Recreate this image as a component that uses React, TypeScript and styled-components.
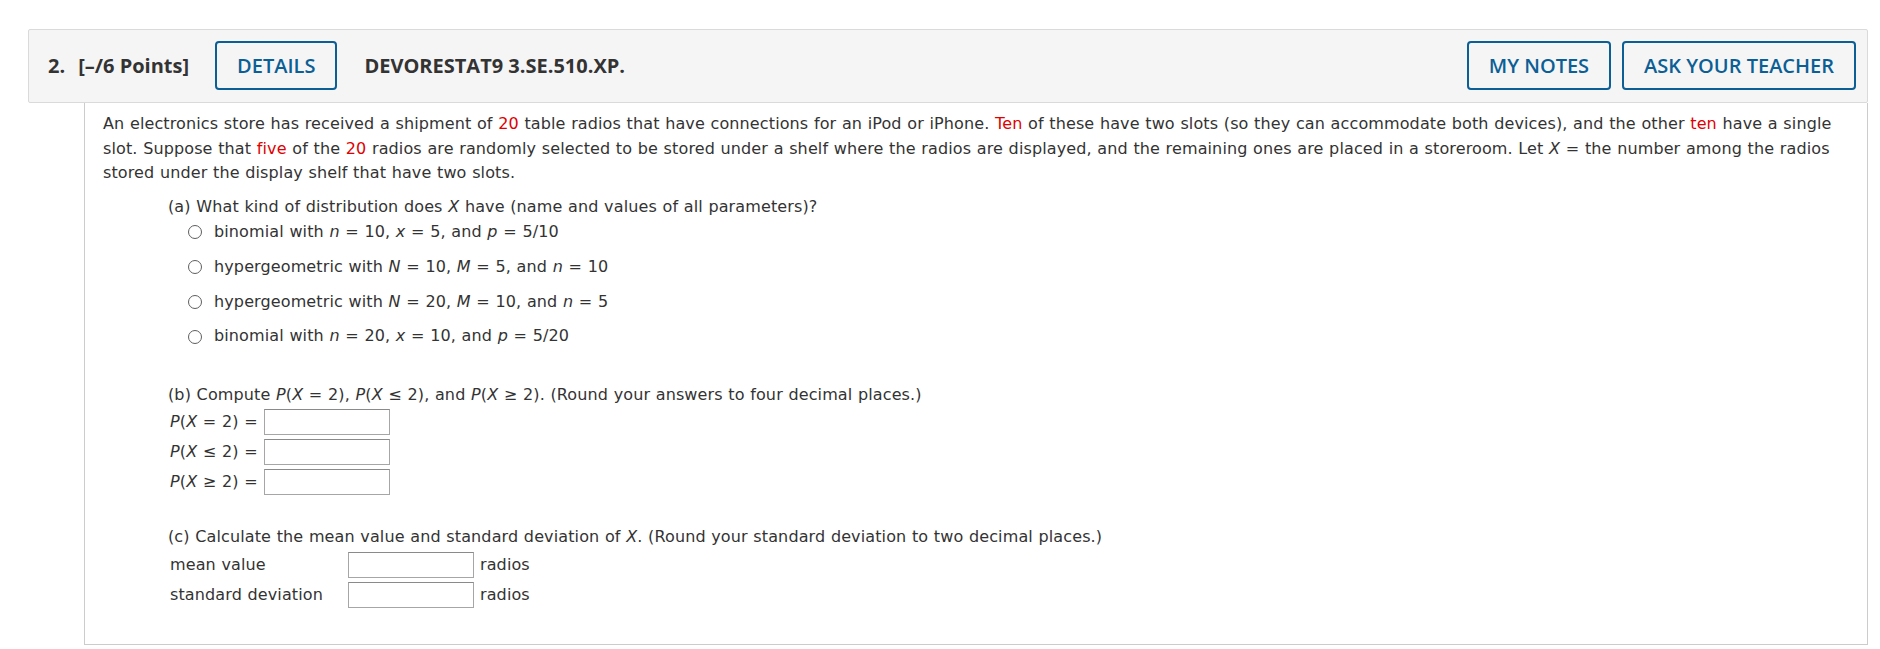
import React, { FC } from "react";
import styled, { createGlobalStyle } from "styled-components";

const GlobalStyle = createGlobalStyle`
  html, body {
    margin: 0;
    padding: 0;
    background: #ffffff;
  }
`;

const brand = {
  blue: "#0b5f95",
  text: "#333333",
  red: "#e00000",
  headerBg: "#f5f5f5",
  headerBorder: "#dadada",
  bodyBorder: "#cccccc",
};

const Page = styled.div`
  padding: 29px 12px 0 28px;
`;

const QuestionHeader = styled.div`
  display: flex;
  align-items: center;
  background: ${brand.headerBg};
  border: 1px solid ${brand.headerBorder};
  border-radius: 2px;
  padding: 11px 11px 12px 19px;
  font-family: "Open Sans", "Liberation Sans", sans-serif;
  font-size: 20px;
  color: ${brand.text};
`;

const QNumber = styled.span`
  font-weight: 700;
`;

const Points = styled.span`
  font-weight: 700;
  margin-left: 13px;
`;

const Code = styled.span`
  font-weight: 700;
  margin-left: 27px;
`;

const Spacer = styled.div`
  flex: 1;
`;

const OutlineButton = styled.button<{ $gap?: number }>`
  height: 49px;
  padding: 0 20px;
  margin-left: ${(p) => p.$gap ?? 0}px;
  background: transparent;
  border: 2px solid ${brand.blue};
  border-radius: 4px;
  color: ${brand.blue};
  font-family: "Open Sans", "Liberation Sans", sans-serif;
  font-size: 20px;
  font-weight: 600;
  cursor: pointer;
`;

const QuestionBody = styled.div`
  margin-left: 56px;
  border: 1px solid ${brand.bodyBorder};
  border-top: none;
  padding: 9px 20px 36px 18px;
  font-family: "DejaVu Sans", Verdana, sans-serif;
  font-size: 16px;
  line-height: 24.5px;
  letter-spacing: 0.12px;
  word-spacing: 0.4px;
  color: ${brand.text};
`;

const Para = styled.p`
  margin: 0;
`;

const Red = styled.span`
  color: ${brand.red};
`;

const Part = styled.div<{ $top: number }>`
  margin-top: ${(p) => p.$top}px;
  padding-left: 65px;
`;

const OptionList = styled.div`
  display: flex;
  flex-direction: column;
  gap: 10.3px;
  margin: 1px 0 0 20px;
`;

const OptionRow = styled.label`
  display: flex;
  align-items: center;
  height: 24.5px;
`;

const Radio = styled.input.attrs({ type: "radio" })`
  appearance: none;
  width: 14px;
  height: 14px;
  margin: 0 12px 0 0;
  border: 1.6px solid #5e5e5e;
  border-radius: 50%;
  background: #fff;
`;

const AnswerList = styled.div`
  display: flex;
  flex-direction: column;
  gap: 4px;
  margin: 2px 0 0 2px;
`;

const AnswerRow = styled.div`
  display: flex;
  align-items: center;
  height: 26px;
`;

const AnswerBox = styled.input.attrs({ type: "text" })`
  box-sizing: border-box;
  width: 126px;
  height: 26px;
  margin: 0 0 0 6px;
  border: 1px solid #a6a6a6;
  border-top-color: #8a8a8a;
  border-radius: 0;
  background: #fff;
`;

const UnitGrid = styled.div`
  display: grid;
  grid-template-columns: 178px 126px auto;
  row-gap: 4px;
  margin: 2px 0 0 2px;
  align-items: center;
`;

const UnitBox = styled(AnswerBox)`
  margin: 0;
`;

const Unit = styled.span`
  margin-left: 6px;
`;

const V: FC<{ children: React.ReactNode }> = ({ children }) => <i>{children}</i>;

const options: React.ReactNode[] = [
  <>binomial with <V>n</V> = 10, <V>x</V> = 5, and <V>p</V> = 5/10</>,
  <>hypergeometric with <V>N</V> = 10, <V>M</V> = 5, and <V>n</V> = 10</>,
  <>hypergeometric with <V>N</V> = 20, <V>M</V> = 10, and <V>n</V> = 5</>,
  <>binomial with <V>n</V> = 20, <V>x</V> = 10, and <V>p</V> = 5/20</>,
];

const probs = ["=", "≤", "≥"];

export default function App() {
  return (
    <Page>
      <GlobalStyle />
      <QuestionHeader>
        <QNumber>2.</QNumber>
        <Points>[–/6 Points]</Points>
        <OutlineButton $gap={26}>DETAILS</OutlineButton>
        <Code>DEVORESTAT9 3.SE.510.XP.</Code>
        <Spacer />
        <OutlineButton>MY NOTES</OutlineButton>
        <OutlineButton $gap={11}>ASK YOUR TEACHER</OutlineButton>
      </QuestionHeader>
      <QuestionBody>
        <Para>
          An electronics store has received a shipment of <Red>20</Red> table radios that have connections for an iPod or iPhone.{" "}
          <Red>Ten</Red> of these have two slots (so they can accommodate both devices), and the other <Red>ten</Red> have a single
          slot. Suppose that <Red>five</Red> of the <Red>20</Red> radios are randomly selected to be stored under a shelf where the
          radios are displayed, and the remaining ones are placed in a storeroom. Let <V>X</V> = the number among the radios stored
          under the display shelf that have two slots.
        </Para>

        <Part $top={9}>
          (a) What kind of distribution does <V>X</V> have (name and values of all parameters)?
          <OptionList>
            {options.map((o, i) => (
              <OptionRow key={i}>
                <Radio name="dist" />
                <span>{o}</span>
              </OptionRow>
            ))}
          </OptionList>
        </Part>

        <Part $top={34}>
          (b) Compute <V>P</V>(<V>X</V> = 2), <V>P</V>(<V>X</V> ≤ 2), and <V>P</V>(<V>X</V> ≥ 2). (Round your answers to four
          decimal places.)
          <AnswerList>
            {probs.map((s) => (
              <AnswerRow key={s}>
                <span>
                  <V>P</V>(<V>X</V> {s} 2) =
                </span>
                <AnswerBox />
              </AnswerRow>
            ))}
          </AnswerList>
        </Part>

        <Part $top={30}>
          (c) Calculate the mean value and standard deviation of <V>X</V>. (Round your standard deviation to two decimal places.)
          <UnitGrid>
            <span>mean value</span>
            <UnitBox />
            <Unit>radios</Unit>
            <span>standard deviation</span>
            <UnitBox />
            <Unit>radios</Unit>
          </UnitGrid>
        </Part>
      </QuestionBody>
    </Page>
  );
}
